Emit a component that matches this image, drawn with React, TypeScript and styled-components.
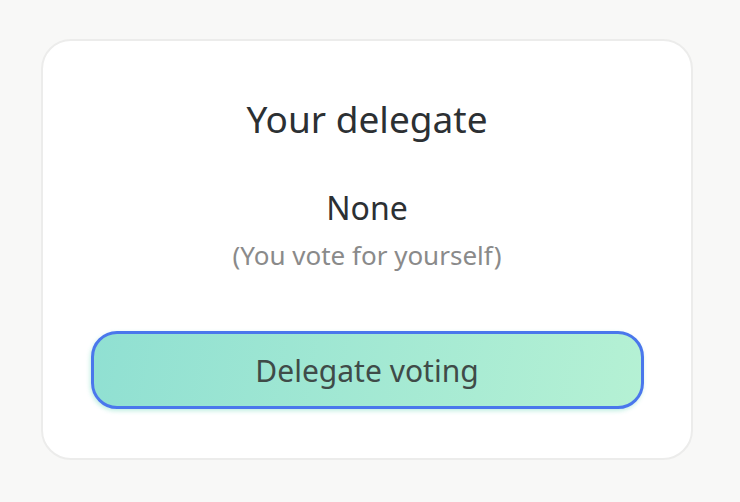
import React from "react";
import styled, { createGlobalStyle } from "styled-components";

const GlobalStyle = createGlobalStyle`
  html, body {
    margin: 0;
    padding: 0;
    background: #f8f8f7;
  }
  body {
    font-family: "Noto Sans", "Open Sans", sans-serif;
  }
`;

// 위임 카드
export default function App() {
  return (
    <>
      <GlobalStyle />
      <Page>
        <Card>
          <Title>Your delegate</Title>
          <Delegate>None</Delegate>
          <Note>(You vote for yourself)</Note>
          <DelegateButton>Delegate voting</DelegateButton>
        </Card>
      </Page>
    </>
  );
}

const Page = styled.div`
  width: 740px;
  height: 502px;
  box-sizing: border-box;
  padding: 39px 47px 42px 41px;
`;

const Card = styled.div`
  box-sizing: border-box;
  width: 652px;
  height: 421px;
  background: #fff;
  border: 2px solid #ececeb;
  border-radius: 30px;
  display: flex;
  flex-direction: column;
  align-items: center;
  padding: 56px 48px 0;
`;

const Title = styled.h2`
  margin: 0;
  font-size: 37px;
  font-weight: 400;
  line-height: 44px;
  color: #2c3033;
`;

const Delegate = styled.div`
  margin-top: 47px;
  font-size: 32px;
  line-height: 40px;
  color: #2c3033;
`;

const Note = styled.div`
  margin-top: 12px;
  font-size: 26px;
  line-height: 30px;
  color: #8a8a8a;
`;

const DelegateButton = styled.button`
  margin-top: 61px;
  box-sizing: border-box;
  width: 553px;
  height: 78px;
  border: 3px solid #4a77ec;
  border-radius: 26px;
  background: linear-gradient(100deg, #90e0d2 0%, #b5f1d4 100%);
  box-shadow: -1px 2px 4px rgba(120, 220, 190, 0.45);
  font-family: inherit;
  font-size: 30px;
  color: #3f4b48;
  cursor: pointer;
`;
